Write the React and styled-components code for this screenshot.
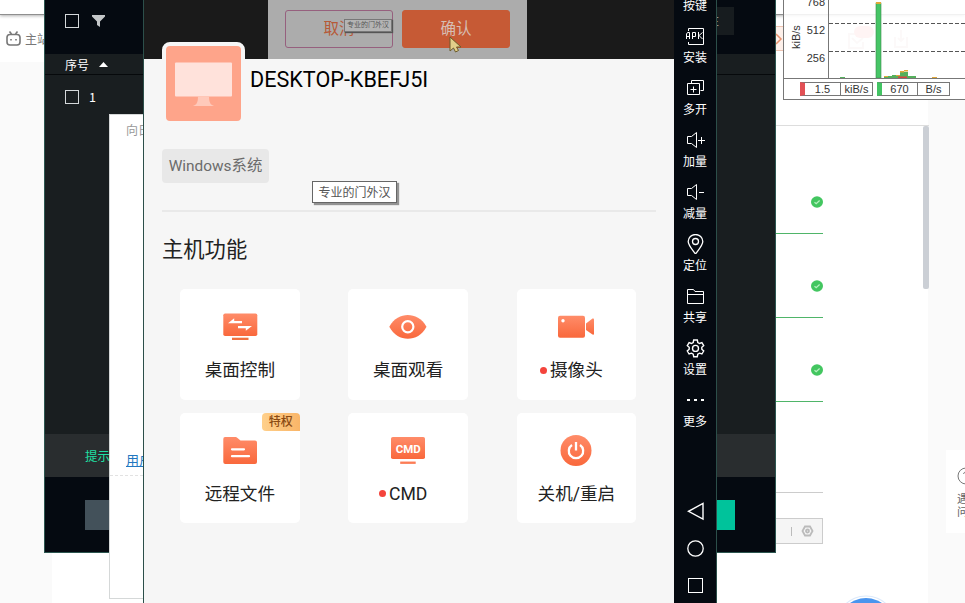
import React from 'react';
import styled, { createGlobalStyle } from 'styled-components';

const cjk = '"Noto Sans CJK SC", sans-serif';

const tools = [
  { label: '按键', icon: null },
  { label: '安装', icon: 'apk' },
  { label: '多开', icon: 'multi' },
  { label: '加量', icon: 'volUp' },
  { label: '减量', icon: 'volDown' },
  { label: '定位', icon: 'pin' },
  { label: '共享', icon: 'folder' },
  { label: '设置', icon: 'gear' },
  { label: '更多', icon: 'more' },
];

const features = [
  { label: '桌面控制', icon: 'control' },
  { label: '桌面观看', icon: 'eye' },
  { label: '摄像头', icon: 'camera', dot: true },
  { label: '远程文件', icon: 'files', badge: '特权' },
  { label: 'CMD', icon: 'cmd', dot: true },
  { label: '关机/重启', icon: 'power' },
];

const ToolIcon = ({ name }) => (
  <Line width="20" height="20" viewBox="0 0 20 20">
    {name === 'apk' && (
      <>
        <path d="M3.500 5V2.500h15v16h-15V16" />
        <path d="M1.500 13V8l1-1.500h2v6.500M1.500 10.500h3M7.500 13V6.500h3v4h-3M13.500 6v7M17.500 6.500L14 9.500l3.500 3.500" />
      </>
    )}
    {name === 'multi' && (
      <>
        <path d="M6.500 5.500v-3h12v10h-3" />
        <path d="M2.500 5.500h12v11h-12zM8.500 8.500v6M5.500 11.500h6" />
      </>
    )}
    {name === 'volUp' && <path d="M2.500 6.500h4l5-4v15l-5-4h-4zM13 10.500h7M16.500 7v7" />}
    {name === 'volDown' && <path d="M2.500 6.500h4l5-4v15l-5-4h-4zM14 10.500h5" />}
    {name === 'pin' && (
      <>
        <path d="M10.500 20C6 14 3.200 11 3.200 7.500a7.300 7 0 0 1 14.600 0C17.800 11 15 14 10.500 20z" strokeWidth="1.300" />
        <circle cx="10.500" cy="7.500" r="3" strokeWidth="1.300" />
      </>
    )}
    {name === 'folder' && <path d="M2.500 17.500v-14h6l1.500 2h8.500v12zM2.500 8.500h16" />}
    {name === 'gear' && (
      <g strokeWidth="1.400">
        <path d="M8.700 2h3.600l.5 2.500 1.700 1 2.400-.9 1.800 3.100-1.900 1.600v2l1.900 1.700-1.800 3-2.400-.8-1.700 1-.5 2.500H8.700l-.5-2.500-1.700-1-2.400.8-1.800-3 1.900-1.700v-2L2.300 7.700l1.800-3.100 2.400.9 1.700-1z" />
        <circle cx="10.500" cy="10.400" r="3" />
      </g>
    )}
    {name === 'more' && <path d="M2 10h3M9 10h3M16 10h3" strokeWidth="2" />}
  </Line>
);

const FeatureIcon = ({ name }) => (
  <svg width="40" height="40" viewBox="0 0 40 40">
    <defs>
      <linearGradient id={`g-${name}`} x1="0" y1="0" x2="0" y2="1">
        <stop offset="0" stopColor="#ff8c69" />
        <stop offset="1" stopColor="#f9683c" />
      </linearGradient>
    </defs>
    <g fill={`url(#g-${name})`}>
      {name === 'control' && (
        <>
          <rect x="3.300" y="7.500" width="34" height="22.500" rx="1.800" />
          <rect x="12" y="31.700" width="16.500" height="2.300" fill="#ef7040" />
          <path d="M8 17.300L14.200 12.300V15H22v2.300zM32 20L25.800 24.800v-2.500H18V20z" fill="#fff" />
        </>
      )}
      {name === 'eye' && (
        <>
          <path d="M1.300 20.800C6 12.300 13 9 19.800 9s14 3.300 18.700 11.800C34 29.300 27 32.800 19.800 32.800S6 29.300 1.300 20.800z" />
          <circle cx="19.800" cy="20.800" r="5.600" fill="none" stroke="#fff" strokeWidth="2.200" />
        </>
      )}
      {name === 'camera' && (
        <>
          <rect x="2" y="9.800" width="27" height="22" rx="2" />
          <path d="M30 17.500l6.500-5q1.500-.5 1.500 1V28q0 1-1.500.5L30 24z" />
          <circle cx="7" cy="14.800" r="1.700" fill="#fff" />
        </>
      )}
      {name === 'files' && (
        <>
          <path d="M5 7h10.500q1 0 2 1l3 2.500H35q2 0 2 2V32q0 2-2 2H5.300q-2 0-2-2V9q0-2 1.700-2z" />
          <path d="M12 19.300h12M12 26.200h17" stroke="#fff" strokeWidth="2.200" strokeLinecap="round" />
        </>
      )}
      {name === 'cmd' && (
        <>
          <rect x="3" y="7" width="34" height="22" rx="1.800" />
          <rect x="12.200" y="31.500" width="15.500" height="2.300" />
          <text x="20.200" y="22.500" fill="#fff" fontFamily="Roboto, sans-serif" fontWeight="700" fontSize="11.500" textAnchor="middle">CMD</text>
        </>
      )}
      {name === 'power' && (
        <>
          <circle cx="20" cy="20.500" r="15.500" />
          <path d="M16 15a7.200 7.200 0 1 0 8 0M20 12v8.500" fill="none" stroke="#fff" strokeWidth="2.300" />
        </>
      )}
    </g>
  </svg>
);

const BrowserPage = () => (
  <Page>
    <TabStrip />
    <SiteNav>
      <svg width="16" height="16" viewBox="0 0 16 16" fill="none" stroke="#777" strokeWidth="1.600">
        <rect x="1" y="3.500" width="13" height="10.500" rx="3" />
        <path d="M3.500 .5l2 2.500M11.500 .5l-2 2.500M5 8v1.500M10 8v1.500" />
      </svg>
      <SiteName>主站</SiteName>
      <NavRight>
        <Chip>
          <svg width="8" height="12" viewBox="0 0 8 12" fill="none" stroke="#e8936f" strokeWidth="1.500"><path d="M1 1l5 5-5 5" /></svg>
        </Chip>
        <svg width="100" height="30" viewBox="0 0 100 30" fill="none" stroke="#e6cfcb" strokeWidth="2">
          <path d="M18 10H3v14h14V18M6 14l5 5 6-5" />
          <rect x="8" y="2" width="20" height="12" rx="6" fill="#ffa5a5" stroke="none" />
          <path d="M49 13v10h12V13M55 6v11M52 14l3 3 3-3" />
        </svg>
      </NavRight>
    </SiteNav>
    <Content>
      <Sheet>
        <Fields>
          <Field><Check /></Field>
          <Field><Check /></Field>
          <Field><Check /></Field>
          <PlainField />
          <TagInput>
            <i />
            <svg width="13" height="12" viewBox="0 0 13 12" fill="none" stroke="#bbb" strokeWidth="1.800">
              <path d="M4 1.500h5L11.500 6 9 10.500H4L1.500 6z" />
              <circle cx="6.500" cy="6" r="1.500" />
            </svg>
          </TagInput>
        </Fields>
        <ScrollThumb />
      </Sheet>
    </Content>
    <HelpCard>
      <svg width="18" height="18" viewBox="0 0 18 18" fill="none" stroke="#777">
        <circle cx="9" cy="9" r="8" />
        <path d="M6.500 7a2.500 2.500 0 1 1 2.500 3v2" />
      </svg>
      <span>遇到</span>
      <span>问题</span>
    </HelpCard>
    <FloatButton />
  </Page>
);

const ManagerWindow = () => (
  <DarkWindow>
    <DarkToolbar>
      <Box />
      <svg width="13" height="12" viewBox="0 0 13 12" fill="#c4c7c9"><path d="M0 0h13v1.500L8 6.500V12L5 10V6.500L0 1.500z" /></svg>
      <DarkTab>E</DarkTab>
    </DarkToolbar>
    <DarkHead>
      序号
      <svg width="9" height="5" viewBox="0 0 9 5" fill="#fff"><path d="M0 5L4.500 0 9 5z" /></svg>
    </DarkHead>
    <DarkBody>
      <DarkRow><Box /><span>1</span></DarkRow>
    </DarkBody>
    <TipBar>提示</TipBar>
    <DarkFooter>
      <FootButton color="#43515a" />
      <FootButton color="#00c39b" />
    </DarkFooter>
  </DarkWindow>
);

const PhoneWindow = () => (
  <Phone>
    <Screen>
      <Hero>
        <HeroDialog>
          <HeroButton>
            取消
            <MiniTip>专业的门外汉</MiniTip>
          </HeroButton>
          <HeroButton $primary>确认</HeroButton>
          <Cursor width="14" height="18" viewBox="0 0 14 18">
            <path d="M1 1v14l3.500-3 2 4 3-1.500-2-3.500H12z" fill="#e2cf8a" stroke="#6b5b2c" />
          </Cursor>
        </HeroDialog>
      </Hero>
      <Profile>
        <Avatar>
          <svg width="75" height="75" viewBox="0 0 75 75">
            <rect x="9" y="16.500" width="57" height="34" rx="1" fill="#ffe2db" />
            <path d="M32 50.500h11q0 7 3 8.500l2 1H27l2-1q3-1.500 3-8.500z" fill="#ffc9ba" />
          </svg>
        </Avatar>
        <HostName>DESKTOP-KBEFJ5I</HostName>
      </Profile>
      <SystemTag>Windows系统</SystemTag>
      <Divider />
      <Heading>主机功能</Heading>
      <Grid>
        {features.map(({ label, icon, dot, badge }) => (
          <Card key={label}>
            <FeatureIcon name={icon} />
            <CardLabel $dot={dot}>{dot && <Dot />}{label}</CardLabel>
            {badge && <Badge>{badge}</Badge>}
          </Card>
        ))}
      </Grid>
    </Screen>
    <Sidebar>
      {tools.map(({ label, icon }) => (
        <Tool key={label}>
          <ToolIcon name={icon} />
          <span>{label}</span>
        </Tool>
      ))}
      <AndroidKeys>
        <Line width="19" height="19" viewBox="0 0 19 19"><path d="M17 1.500v15.500L2.500 9.300z" strokeWidth="1.400" /></Line>
        <Line width="19" height="19" viewBox="0 0 19 19"><circle cx="9.500" cy="9.500" r="7.700" strokeWidth="1.300" /></Line>
        <Line width="19" height="19" viewBox="0 0 19 19"><rect x="2.500" y="2.500" width="14" height="14" /></Line>
      </AndroidKeys>
    </Sidebar>
  </Phone>
);

const TrafficWindow = () => (
  <Traffic>
    <Plot>
      <Unit>kiB/s</Unit>
      <Ticks>
        <span>768</span>
        <span>512</span>
        <span>256</span>
      </Ticks>
      <svg width="137" height="78" viewBox="0 0 137 78">
        <path d="M.5 0v78" stroke="#777" />
        <path d="M1 23.500h136M1 51.500h136" stroke="#555" strokeDasharray="4 2" />
        <rect x="48" y="3" width="5" height="75" fill="#46c566" stroke="#3a8a4c" strokeWidth=".6" />
        <rect x="48" y="2" width="5" height="2" fill="#e0a83a" />
        <path d="M12 77h5v1h-5zM56 76h8v2h-8zM64 75h8v3h-8zM72 72h8v6h-8zM80 76h8v2h-8z" fill="#55b05c" />
        <path d="M56 76h4v1h-4zM68 75h4v1h-4zM72 71h4v1.500h-4zM76 70h4v1.500h-4zM104 77h5v1h-5z" fill="#e0a83a" />
        <path d="M70 76.500h9v1.500h-9z" fill="#d9443f" />
      </svg>
    </Plot>
    <Legend>
      <Rate color="#e25055"><b>1.5</b><span>kiB/s</span></Rate>
      <Rate color="#42c463"><b>670</b><span>B/s</span></Rate>
    </Legend>
  </Traffic>
);

const App = () => (
  <Desktop>
    <Global />
    <BrowserPage />
    <ManagerWindow />
    <Agreement>
      <p>向日葵</p>
      <a>用户协议</a>
    </Agreement>
    <PhoneWindow />
    <TrafficWindow />
    <Tooltip>专业的门外汉</Tooltip>
  </Desktop>
);

export default App;

const Global = createGlobalStyle`
  * { box-sizing: border-box; }
  body { margin: 0; overflow: hidden; font-family: ${cjk}; }
  svg { display: block; flex: none; }
`;

const Desktop = styled.div`
  position: relative;
  width: 965px;
  height: 603px;
  overflow: hidden;
`;

const Line = styled.svg`
  fill: none;
  stroke: #fff;
`;

/* browser page */

const Page = styled.div`
  isolation: isolate;
  display: flex;
  flex-direction: column;
  height: 100%;
  background: #fafafa;
`;

const TabStrip = styled.div`
  flex: none;
  height: 15px;
  background: #fff;
  border-bottom: 1px solid #8f8f8f;
  box-shadow: 0 1px 3px rgba(0, 0, 0, 0.3);
  z-index: 1;
`;

const SiteNav = styled.div`
  flex: none;
  display: flex;
  align-items: center;
  height: 47px;
  padding-left: 6px;
  background: #fff;
`;

const SiteName = styled.span`
  margin-left: 3px;
  font-size: 12px;
  color: #777;
`;

const NavRight = styled.div`
  display: flex;
  align-items: center;
  gap: 61px;
  margin-left: auto;
  width: 190px;
`;

const Chip = styled.div`
  display: flex;
  align-items: center;
  flex: none;
  width: 10px;
  height: 25px;
  background: #fdf0ea;
  border: solid #eec3b1;
  border-width: 1px 0;
`;

const Content = styled.div`
  flex: 1;
  display: flex;
  width: 876px;
  margin-left: 52px;
  padding-top: 63px;
  background: #fff;
`;

const Sheet = styled.div`
  flex: 1;
  display: flex;
  justify-content: space-between;
  border-top: 1px solid #ddd;
  margin-right: -1px;
`;

const Fields = styled.div`
  width: 771px;
  padding-top: 24px;
`;

const Field = styled.div`
  display: flex;
  justify-content: flex-end;
  height: 84px;
  padding-top: 45.5px;
  border-bottom: 1px solid #4fb569;
`;

const Check = () => (
  <svg width="12" height="12" viewBox="0 0 12 12">
    <ellipse cx="6" cy="6" rx="6" ry="5.700" fill="#43c660" />
    <path d="M3.500 6.200l1.700 1.500L8.600 4.600" fill="none" stroke="#b5f0bf" strokeWidth="1.300" />
  </svg>
);

const PlainField = styled.div`
  height: 91px;
  border-bottom: 1px solid #ccc;
`;

const TagInput = styled.div`
  display: flex;
  align-items: center;
  justify-content: flex-end;
  gap: 9px;
  height: 26px;
  margin-top: 25px;
  padding-right: 8px;
  background: #f5f5f5;
  border: 1px solid #ccc;

  i {
    width: 1px;
    height: 9px;
    background: #bbb;
  }
`;

const ScrollThumb = styled.div`
  width: 6px;
  height: 163px;
  background: #cbcfd5;
  border-radius: 2px;
`;

const HelpCard = styled.div`
  position: absolute;
  left: 946px;
  top: 450px;
  width: 50px;
  height: 83px;
  padding: 17px 11px 0;
  background: #fff;
  font-size: 11.5px;
  line-height: 13px;
  color: #666;

  svg { margin-bottom: 7px; }
  span { display: block; }
`;

const FloatButton = styled.div`
  position: absolute;
  left: 838px;
  top: 598px;
  width: 56px;
  height: 56px;
  border-radius: 50%;
  background: #4a95ee;
  box-shadow: 0 0 0 1.5px #fff, 0 0 0 2.5px #dbe9fb;
`;

/* dark manager window */

const DarkWindow = styled.div`
  position: absolute;
  left: 44px;
  top: -1px;
  width: 732px;
  height: 554px;
  display: flex;
  flex-direction: column;
  background: #191e20;
  border: 1px solid #2c5650;
  color: #fff;
`;

const DarkToolbar = styled.div`
  display: flex;
  align-items: center;
  gap: 13px;
  height: 54px;
  padding: 0 41px 12px 20px;
  background: #050a11;
`;

const Box = styled.div`
  width: 14px;
  height: 14px;
  border: 1px solid #d4d8da;
`;

const DarkTab = styled.div`
  margin-left: auto;
  width: 90px;
  height: 28px;
  padding-left: 68px;
  background: #171c1f;
  font-size: 12px;
  line-height: 28px;
  color: #8b9092;
`;

const DarkHead = styled.div`
  display: flex;
  align-items: center;
  gap: 10px;
  height: 21px;
  padding-left: 20px;
  border-bottom: 1px solid #06090b;
  font-size: 12px;
`;

const DarkBody = styled.div`
  flex: 1;
  padding: 15px 20px;
`;

const DarkRow = styled.div`
  display: flex;
  align-items: center;
  gap: 10px;
  height: 14px;
  font-size: 12.5px;
  line-height: 14px;
`;

const TipBar = styled.div`
  height: 43px;
  padding-left: 40px;
  background: #292d2f;
  font-size: 12.5px;
  line-height: 43px;
  color: #1fe0a4;
`;

const DarkFooter = styled.div`
  display: flex;
  justify-content: space-between;
  height: 75px;
  padding: 23px 40px 0;
  background: #050a11;
`;

const FootButton = styled.div`
  width: 120px;
  height: 30px;
  background: ${props => props.color};
`;

const Agreement = styled.div`
  position: absolute;
  left: 109px;
  top: 114px;
  width: 200px;
  height: 485px;
  background: #fff;
  border: 1px solid #d5d8d8;
  font-size: 12px;

  p {
    margin: 0;
    height: 333px;
    padding: 6px 16px;
    color: #999;
  }

  a {
    display: block;
    height: 28px;
    padding-left: 16px;
    font-size: 13px;
    line-height: 24px;
    color: #2277c0;
    text-decoration: underline;
    border-bottom: 1px dashed #e2e2e2;
  }
`;

/* phone window */

const Phone = styled.div`
  position: absolute;
  left: 143px;
  top: 0;
  width: 574px;
  height: 603px;
  display: flex;
  border: solid #2c4f4a;
  border-width: 0 1px;
  font-family: Roboto, ${cjk};
`;

const Screen = styled.div`
  width: 530px;
  background: #f6f6f6;
`;

const Hero = styled.div`
  height: 59px;
  padding-left: 124px;
  background: #1a1a1a;
`;

const HeroDialog = styled.div`
  position: relative;
  display: flex;
  gap: 9px;
  width: 259px;
  height: 59px;
  padding: 10px 17px;
  background: #acacac;
`;

const HeroButton = styled.div`
  position: relative;
  width: 108px;
  height: 38px;
  border: 1px solid ${props => props.$primary ? '#c65a35' : '#96607e'};
  border-radius: 3px;
  background: ${props => props.$primary ? '#c65a35' : 'transparent'};
  color: ${props => props.$primary ? '#d6bdb3' : '#b65a38'};
  font-size: 15.5px;
  line-height: 37px;
  text-align: center;
`;

const MiniTip = styled.span`
  position: absolute;
  left: 58px;
  top: 8px;
  width: 48px;
  height: 13px;
  border: 1px solid #777;
  background: #b4b4b4;
  box-shadow: 1px 1px 1px #555;
  font-size: 7px;
  line-height: 11px;
  color: #555;
`;

const Cursor = styled.svg`
  position: absolute;
  left: 181px;
  top: 36px;
`;

const Profile = styled.div`
  display: flex;
  height: 90px;
  padding-left: 18px;
`;

const Avatar = styled.div`
  position: relative;
  flex: none;
  width: 83px;
  height: 83px;
  margin-top: -17px;
  border: 4px solid #f6f6f6;
  border-radius: 8px;
  background: #fea48a;
`;

const HostName = styled.div`
  margin: 7px 0 0 5px;
  font-size: 21.6px;
  line-height: 28px;
  color: #000;
`;

const SystemTag = styled.div`
  width: 107px;
  height: 34px;
  margin-left: 18px;
  border-radius: 4px;
  background: #e8e8e8;
  font-size: 15.4px;
  line-height: 35px;
  text-align: center;
  white-space: nowrap;
  color: #6b6b6b;
`;

const Divider = styled.div`
  height: 2px;
  margin: 27px 18px 0;
  background: #e9e9e9;
`;

const Heading = styled.div`
  padding-left: 18px;
  margin-top: 22px;
  font-size: 21.3px;
  line-height: 32px;
  color: #222;
`;

const Grid = styled.div`
  display: grid;
  grid-template-columns: repeat(3, 119.7px);
  grid-auto-rows: 110.5px;
  gap: 13px 48.6px;
  padding: 23px 0 0 36px;
`;

const Card = styled.div`
  position: relative;
  display: flex;
  flex-direction: column;
  align-items: center;
  padding-top: 17px;
  border-radius: 5px;
  background: #fff;
`;

const CardLabel = styled.div`
  display: flex;
  align-items: center;
  margin-top: 11px;
  padding-right: ${props => props.$dot ? '10px' : 0};
  font-size: 17.6px;
  line-height: 27px;
  color: #222;
`;

const Dot = styled.i`
  width: 7px;
  height: 7px;
  margin: 0 3px 1px 0;
  border-radius: 50%;
  background: #f4443c;
`;

const Badge = styled.div`
  position: absolute;
  right: 0;
  top: 0;
  width: 38px;
  height: 18px;
  border-radius: 4px 4px 0 4px;
  background: linear-gradient(90deg, #ffd08b, #f9b568);
  font-size: 12px;
  font-weight: 500;
  line-height: 18px;
  text-align: center;
  color: #8a4b14;
`;

const Sidebar = styled.div`
  display: flex;
  flex-direction: column;
  width: 42px;
  background: #050a11;
`;

const Tool = styled.div`
  flex: none;
  display: flex;
  flex-direction: column;
  align-items: center;
  height: 52px;
  font-size: 12px;
  line-height: 24px;
  color: #fff;

  &:first-child {
    margin-top: -26px;
    /* the first entry is scrolled half out of view and shows its label only */
    svg { visibility: hidden; }
  }
`;

const AndroidKeys = styled.div`
  display: flex;
  flex-direction: column;
  align-items: center;
  gap: 18px;
  padding: 60px 0 0 1px;
`;

/* traffic monitor */

const Traffic = styled.div`
  position: absolute;
  left: 783px;
  top: -1px;
  width: 190px;
  height: 101px;
  border: 1px solid #777;
  background: rgba(255, 255, 255, 0.88);
  font-family: "Liberation Sans", sans-serif;
  font-size: 11px;
  color: #333;
`;

const Plot = styled.div`
  display: flex;
  height: 79px;
  border-bottom: 1px solid #777;
`;

const Unit = styled.div`
  width: 16px;
  padding-top: 29px;
  writing-mode: vertical-rl;
  transform: rotate(180deg);
  line-height: 16px;
  margin-left: 4px;
`;

const Ticks = styled.div`
  display: flex;
  flex-direction: column;
  width: 21px;
  margin: -12px 3px 0 0;
  line-height: 28px;
  text-align: right;
`;

const Legend = styled.div`
  display: flex;
  gap: 4px;
  padding: 3px 0 0 16px;
`;

const Rate = styled.div`
  display: flex;
  height: 14px;
  border: 1px solid #777;
  border-left: 5px solid ${props => props.color};
  line-height: 12px;
  text-align: center;

  b {
    width: 36px;
    font-weight: 400;
    border-right: 1px solid #777;
  }

  span { width: 31px; }
`;

const Tooltip = styled.div`
  position: absolute;
  left: 312px;
  top: 181px;
  width: 85px;
  height: 22px;
  border: 1px solid #666;
  background: #fff;
  box-shadow: 2px 2px 1px rgba(0, 0, 0, 0.4);
  font-size: 12px;
  line-height: 20px;
  text-align: center;
  color: #555;
`;
